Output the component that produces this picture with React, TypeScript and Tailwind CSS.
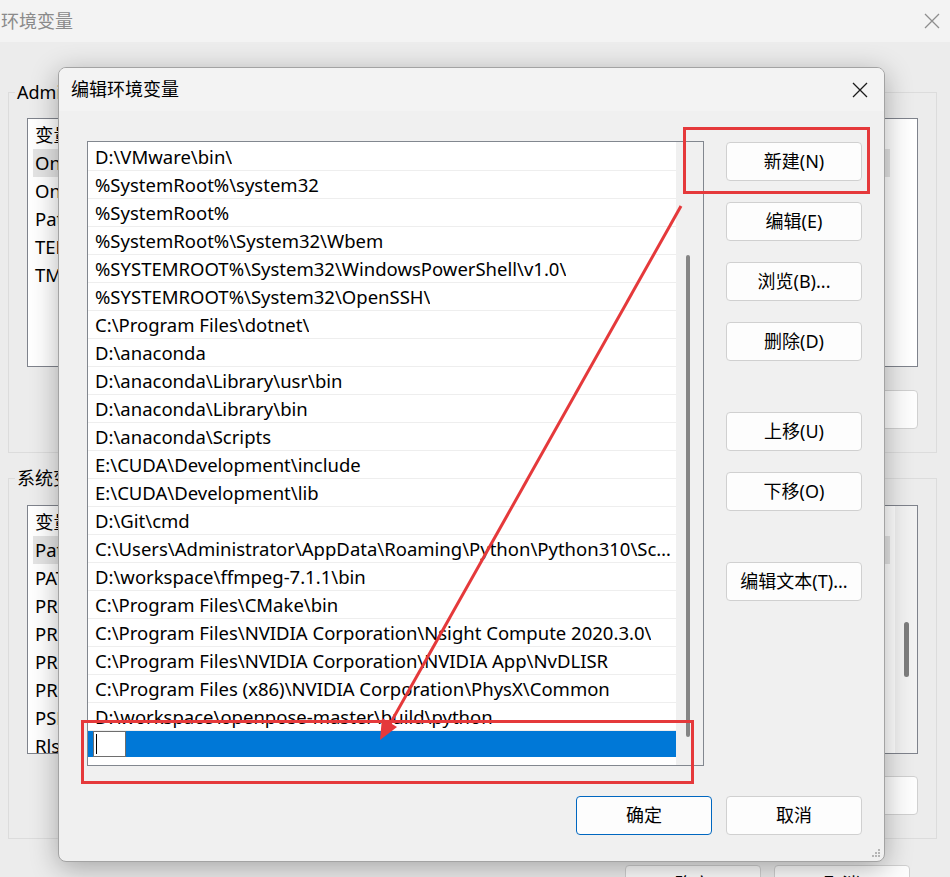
import React from 'react';

const paths = [
  'D:\\VMware\\bin\\',
  '%SystemRoot%\\system32',
  '%SystemRoot%',
  '%SystemRoot%\\System32\\Wbem',
  '%SYSTEMROOT%\\System32\\WindowsPowerShell\\v1.0\\',
  '%SYSTEMROOT%\\System32\\OpenSSH\\',
  'C:\\Program Files\\dotnet\\',
  'D:\\anaconda',
  'D:\\anaconda\\Library\\usr\\bin',
  'D:\\anaconda\\Library\\bin',
  'D:\\anaconda\\Scripts',
  'E:\\CUDA\\Development\\include',
  'E:\\CUDA\\Development\\lib',
  'D:\\Git\\cmd',
  'C:\\Users\\Administrator\\AppData\\Roaming\\Python\\Python310\\Scripts\\',
  'D:\\workspace\\ffmpeg-7.1.1\\bin',
  'C:\\Program Files\\CMake\\bin',
  'C:\\Program Files\\NVIDIA Corporation\\Nsight Compute 2020.3.0\\',
  'C:\\Program Files\\NVIDIA Corporation\\NVIDIA App\\NvDLISR',
  'C:\\Program Files (x86)\\NVIDIA Corporation\\PhysX\\Common',
  'D:\\workspace\\openpose-master\\build\\python',
];

const userVars = ['OneDrive', 'OneDriveConsumer', 'Path', 'TEMP', 'TMP'];
const sysVars = ['Path', 'PATHEXT', 'PROCESSOR_ARCHITECTURE', 'PROCESSOR_IDENTIFIER', 'PROCESSOR_LEVEL', 'PROCESSOR_REVISION', 'PSModulePath', 'RlsSvcPort'];

const CloseIcon = ({ color }: { color: string }) => (
  <svg width="16" height="16" viewBox="0 0 16 16" fill="none" stroke={color} strokeWidth={1.3}>
    <path d="M1 1L15 15M15 1L1 15" />
  </svg>
);

const WinButton: React.FC<{ label: string; className?: string; primary?: boolean }> = ({ label, className = '', primary }) => (
  <div
    className={`flex h-[39px] w-[136px] items-center justify-center rounded-[4px] border bg-[#fdfdfd] text-[18px] text-black ${
      primary ? 'border-[#0067c0]' : 'border-[#d0d0d0]'
    } ${className}`}
  >
    {label}
  </div>
);

// background "环境变量" list (mostly hidden behind the dialog)
const VarList: React.FC<{ items: string[]; selected: number; scroll?: boolean }> = ({ items, selected, scroll }) => (
  <div className="flex h-[249px] overflow-hidden border border-[#7f838c] bg-white">
    <div className="flex-1 pt-[2px]">
      <div className="flex h-[28px] items-center pl-[7px] text-[18.5px]">变量</div>
      {items.map((v, i) => (
        <div
          key={v + i}
          className={`ml-[5px] flex h-[28px] w-[857px] items-center whitespace-nowrap pl-[2px] text-[18.5px] ${
            i === selected ? 'bg-[#e4e4e4]' : ''
          }`}
        >
          {v}
        </div>
      ))}
    </div>
    {scroll && (
      <div className="w-[22px] bg-[#f2f2f2]">
        <div className="mx-auto mt-[116px] h-[55px] w-[5px] rounded-full bg-[#7d7d7d]" />
      </div>
    )}
  </div>
);

export default function App() {
  return (
    <div className="relative h-[877px] w-[950px] overflow-hidden bg-[#ececec] font-['Noto_Sans','Noto_Sans_CJK_SC',sans-serif] text-black">
      {/* background window: 环境变量 */}
      <div className="flex h-[42px] items-center justify-between bg-[#f3f3f3] pr-[10px]">
        <span className="pl-[1px] text-[18px] text-[#8a8a8a]">环境变量</span>
        <CloseIcon color="#8e8e8e" />
      </div>
      <fieldset className="ml-[8px] mt-[40px] w-[929px] border border-[#dcdcdc] px-[18px] pb-[23px]">
        <legend className="-ml-[12px] px-[2px] text-[18px] leading-[20px]">Administrator 的用户变量(U)</legend>
        <div className="mt-[16px]">
          <VarList items={userVars} selected={0} />
        </div>
        <div className="mt-[23px] flex justify-end gap-[14px]">
          <WinButton label="删除(D)" />
        </div>
      </fieldset>
      <fieldset className="ml-[8px] mt-[15px] w-[929px] border border-[#dcdcdc] px-[18px] pb-[23px]">
        <legend className="-ml-[12px] px-[2px] text-[18px] leading-[20px]">系统变量(S)</legend>
        <div className="mt-[17px]">
          <VarList items={sysVars} selected={0} scroll />
        </div>
        <div className="mt-[22px] flex justify-end gap-[14px]">
          <WinButton label="删除(L)" />
        </div>
      </fieldset>
      <div className="mt-[26px] flex gap-[13px] pl-[625px]">
        <WinButton label="确定" />
        <WinButton label="取消" />
      </div>

      {/* dialog: 编辑环境变量 */}
      <div className="absolute left-[58px] top-[67px] flex h-[795px] w-[827px] flex-col overflow-hidden rounded-[8px] border border-[#a3a3a3] bg-[#f0f0f0] shadow-[0_6px_28px_rgba(0,0,0,0.3)]">
        <div className="flex h-[43px] shrink-0 items-center justify-between bg-[#f3f3f3] pl-[12px] pr-[16px]">
          <span className="text-[18px]">编辑环境变量</span>
          <CloseIcon color="#1a1a1a" />
        </div>
        <div className="flex flex-1 flex-col pl-[28px] pr-[22px] pt-[30px]">
          <div className="flex">
            <div className="flex h-[625px] w-[617px] border border-[#82878f] bg-white">
              <div className="w-[588px] pt-[1px]">
                {paths.map((p, i) => (
                  <div
                    key={i}
                    className="flex h-[28px] items-center overflow-hidden border-b border-[#eeeeee] pl-[7px] pr-[4px] text-[18.5px]"
                  >
                    <span className="truncate whitespace-nowrap">{p}</span>
                  </div>
                ))}
                <div className="flex h-[26px] items-stretch bg-[#0078d7] pl-[5px]">
                  <div className="flex w-[33px] items-center border border-[#6e6e6e] bg-white pl-[2px]">
                    <div className="h-[20px] w-[1px] bg-black" />
                  </div>
                </div>
              </div>
              <div className="flex-1 bg-[#f0f0f0]">
                <div className="ml-[10px] mt-[113px] h-[482px] w-[4px] rounded-full bg-[#858585]" />
              </div>
            </div>
            <div className="ml-[22px] flex flex-col pt-[1px]">
              <WinButton label="新建(N)" />
              <WinButton label="编辑(E)" className="mt-[21px]" />
              <WinButton label="浏览(B)..." className="mt-[21px]" />
              <WinButton label="删除(D)" className="mt-[21px]" />
              <WinButton label="上移(U)" className="mt-[51px]" />
              <WinButton label="下移(O)" className="mt-[21px]" />
              <WinButton label="编辑文本(T)..." className="mt-[51px]" />
            </div>
          </div>
          <div className="mt-[30px] flex justify-end gap-[14px]">
            <WinButton label="确定" primary />
            <WinButton label="取消" />
          </div>
        </div>
        <svg className="absolute bottom-[3px] right-[3px]" width="10" height="10" viewBox="0 0 10 10" fill="#b5b5b5">
          <rect x="7" y="1" width="2" height="2" />
          <rect x="4" y="4" width="2" height="2" />
          <rect x="7" y="4" width="2" height="2" />
          <rect x="1" y="7" width="2" height="2" />
          <rect x="4" y="7" width="2" height="2" />
          <rect x="7" y="7" width="2" height="2" />
        </svg>
      </div>

      {/* red annotations */}
      <div className="absolute left-[683px] top-[127px] h-[67px] w-[187px] border-[3px] border-[#e5393b]" />
      <div className="absolute left-[81px] top-[720px] h-[64px] w-[613px] border-[3px] border-[#e5393b]" />
      <svg className="pointer-events-none absolute left-0 top-0" width="950" height="877">
        <line x1="681" y1="206" x2="390" y2="724" stroke="#e5393b" strokeWidth="3" />
        <polygon points="380,740 397,727 382,718" fill="#e5393b" />
      </svg>
    </div>
  );
}
